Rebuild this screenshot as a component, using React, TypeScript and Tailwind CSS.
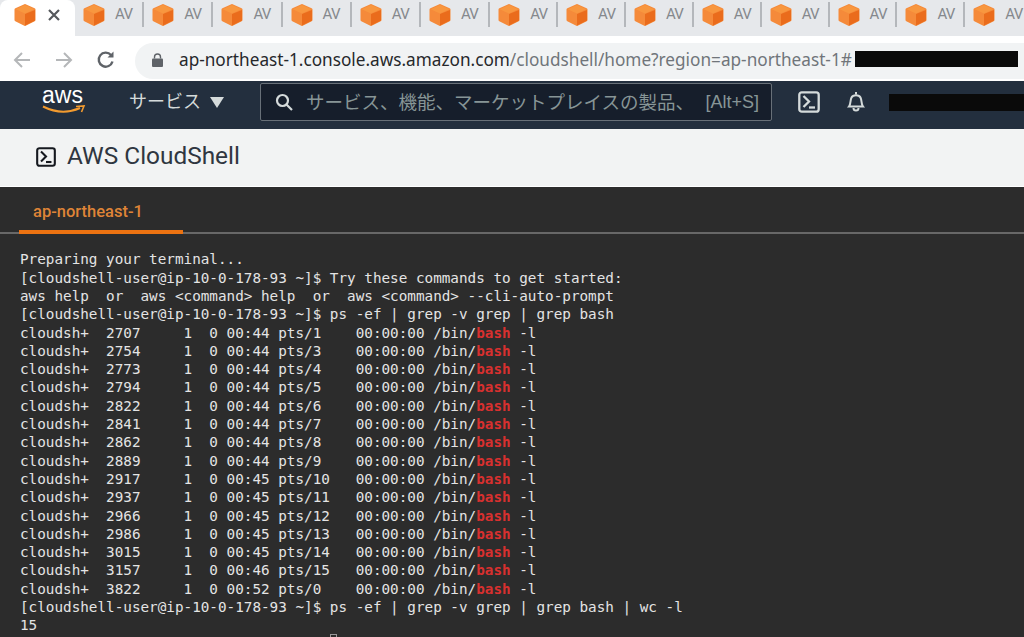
import React from 'react';

const rows = [
  ['2707', '00:44', 'pts/1'],
  ['2754', '00:44', 'pts/3'],
  ['2773', '00:44', 'pts/4'],
  ['2794', '00:44', 'pts/5'],
  ['2822', '00:44', 'pts/6'],
  ['2841', '00:44', 'pts/7'],
  ['2862', '00:44', 'pts/8'],
  ['2889', '00:44', 'pts/9'],
  ['2917', '00:45', 'pts/10'],
  ['2937', '00:45', 'pts/11'],
  ['2966', '00:45', 'pts/12'],
  ['2986', '00:45', 'pts/13'],
  ['3015', '00:45', 'pts/14'],
  ['3157', '00:46', 'pts/15'],
  ['3822', '00:52', 'pts/0'],
];

const Cube = () => (
  <svg width="22" height="22" viewBox="0 0 22 22" className="shrink-0">
    <path d="M11 1.5 L20 5.5 V16 L11 20.5 L2 16 V5.5 Z" fill="#f58a3a" stroke="#f58a3a" strokeWidth="3" strokeLinejoin="round" />
    <path d="M11 10 L21 6 V16.5 L11 21.5 Z" fill="#ea6c1c" />
    <path d="M11 1 L20.5 5.3 L11 9.6 L1.5 5.3 Z" fill="#f8973f" />
  </svg>
);

const TerminalIcon = ({ color, size }: { color: string; size: number }) => (
  <svg width={size} height={size} viewBox="0 0 22 22" fill="none" stroke={color} strokeWidth="2.3" className="shrink-0">
    <rect x="1.3" y="1.3" width="19.4" height="19.4" rx="2.5" />
    <path d="M5.5 5 L11 10.5 L5.5 16" />
    <path d="M11 16.5 H17" />
  </svg>
);

// the later tabs in the strip are a little narrower than the first ones
const Tab = ({ narrow }: { narrow: boolean }) => (
  <div className={`flex h-[25px] shrink-0 items-center pl-[8px] ${narrow ? 'w-[67.9px]' : 'w-[69.2px]'} ${'border-r-2 border-[#b4b7bb]'}`}>
    <Cube />
    <span className="ml-[10px] text-[15px] tracking-[-0.75px] text-[#85888d]">AV</span>
  </div>
);

const App = () => {
  return (
    <div className="flex h-[637px] w-[1024px] flex-col overflow-hidden bg-[#2c2c2c] font-['Roboto',sans-serif]">
      {/* tab strip */}
      <div className="flex h-[36px] shrink-0 overflow-hidden bg-[#e6e8eb]">
        <div className="flex w-[75px] shrink-0 items-start gap-[12px] rounded-t-lg bg-white pl-[14px] pt-[4px]">
          <Cube />
          <svg width="12" height="12" viewBox="0 0 12 12" stroke="#55585c" strokeWidth="2.2" className="mt-[5px]">
            <path d="M1 1 L11 11 M11 1 L1 11" />
          </svg>
        </div>
        <div className="flex pt-[2px]">
          {Array.from({ length: 14 }).map((_, i) => (
            <Tab key={i} narrow={i >= 6} />
          ))}
        </div>
      </div>

      {/* address bar */}
      <div className="flex h-[45px] shrink-0 items-center bg-white pl-[13px] pt-[5px]">
        <svg width="18" height="18" viewBox="0 0 18 18" fill="none" stroke="#b5b7b9" strokeWidth="2" className="mb-[2px]">
          <path d="M17 9 H2 M9 2 L2 9 L9 16" />
        </svg>
        <svg width="18" height="18" viewBox="0 0 18 18" fill="none" stroke="#b5b7b9" strokeWidth="2" className="mb-[2px] ml-[24px]">
          <path d="M1 9 H16 M9 2 L16 9 L9 16" />
        </svg>
        <svg width="20" height="20" viewBox="0 0 20 20" fill="none" stroke="#5f6368" strokeWidth="2.4" className="mb-[2px] ml-[23px]">
          <path d="M16.5 11.5 A7 7 0 1 1 15 5" />
          <path d="M17.5 1.5 V7.5 H11.5 Z" fill="#5f6368" stroke="none" />
        </svg>
        <div className="ml-[19px] flex h-[36px] flex-1 items-center rounded-l-full bg-[#f1f3f4] pl-[17px]">
          <svg width="11" height="14" viewBox="0 0 11 14" className="mb-[2px] shrink-0">
            <path d="M2.5 5.5 V4 A3 3 0 0 1 8.5 4 V5.5" fill="none" stroke="#5f6368" strokeWidth="1.4" />
            <rect x="0" y="5.5" width="11" height="8.5" rx="1" fill="#5f6368" />
          </svg>
          <div className="mb-[2px] ml-[16px] whitespace-nowrap font-['Noto_Sans',sans-serif] text-[17.2px] text-[#70757a]">
            <span className="text-[#26282b]">ap-northeast-1.console.aws.amazon.com</span>/cloudshell/home?region=ap-northeast-1#
          </div>
          <div className="mb-[4px] ml-[3px] h-[16px] w-[163px] shrink-0 bg-[#0a0a0a]" />
        </div>
      </div>

      {/* console nav */}
      <div className="flex h-[48px] shrink-0 items-center bg-[#232f3e] pb-[6px] pl-[42px] text-[#d5dbdb]">
        <div className="relative h-[32px] w-[43px] shrink-0">
          <span className="absolute left-0 top-[-5px] font-['Liberation_Sans',sans-serif] text-[23px] leading-[28px] text-white">aws</span>
          <svg width="44" height="10" viewBox="0 0 44 10" fill="none" className="absolute left-0 top-[19px]">
            <path d="M1 1.5 Q20 11 38 3" stroke="#f39b2f" strokeWidth="2" />
            <path d="M34 1.5 L42 1 L39.5 7" stroke="#f39b2f" strokeWidth="1.6" />
          </svg>
        </div>
        <span className="mb-[3px] ml-[44px] font-['Noto_Sans_CJK_JP',sans-serif] text-[18px]">サービス</span>
        <svg width="14" height="11" viewBox="0 0 14 11" className="ml-[9px]">
          <path d="M0 0 H14 L7 11 Z" fill="#d5dbdb" />
        </svg>
        <div className="ml-[36px] flex h-[38px] w-[512px] shrink-0 items-center rounded-[2px] border border-[#687078] bg-[#161e2b] pl-[14px] pr-[12px]">
          <svg width="18" height="18" viewBox="0 0 18 18" fill="none" stroke="#d5dbdb" strokeWidth="2.2" className="shrink-0">
            <circle cx="7.5" cy="7.5" r="5.5" />
            <path d="M11.5 11.5 L17 17" />
          </svg>
          <span className="ml-[13px] whitespace-nowrap font-['Noto_Sans_CJK_JP',sans-serif] text-[18.5px] text-[#879596]">サービス、機能、マーケットプレイスの製品、</span>
          <span className="ml-auto font-['Liberation_Sans',sans-serif] text-[18px] text-[#879596]">[Alt+S]</span>
        </div>
        <div className="ml-[26px]">
          <TerminalIcon color="#d5dbdb" size={22} />
        </div>
        <svg width="22" height="22" viewBox="0 0 22 22" fill="none" stroke="#d5dbdb" strokeWidth="2" className="ml-[25px]">
          <path d="M4 15.5 C6 13 5 9.5 6.5 6.5 C8 3.5 14 3.5 15.5 6.5 C17 9.5 16 13 18 15.5 Z" />
          <path d="M11 1 V3.5 M8.5 17 A2.5 2.5 0 0 0 13.5 17" />
        </svg>
        <div className="ml-[22px] h-[17px] flex-1 bg-[#0a0a0a]" />
      </div>

      {/* page header */}
      <div className="flex h-[58px] shrink-0 items-center border-b border-white bg-[#f2f3f3] pb-[2px] pl-[36px]">
        <TerminalIcon color="#16191f" size={20} />
        <span className="ml-[11px] text-[24.4px] text-[#2f3640]">AWS CloudShell</span>
      </div>

      {/* region tab */}
      <div className="h-[47px] shrink-0 border-b-2 border-[#686868] pl-[19px]">
        <div className="relative h-[47px] w-[164px] border-b-[4px] border-[#ec7211] pl-[14px] pt-[13px]">
          <span className="text-[16.5px] font-medium leading-[22px] text-[#df8437]">ap-northeast-1</span>
        </div>
      </div>

      {/* terminal */}
      <div className="relative flex-1 whitespace-pre pl-[20px] pt-[16.4px] font-['DejaVu_Sans_Mono',monospace] text-[14.3px] leading-[18.3px] text-[#e4e4e4]">
        <div>Preparing your terminal...</div>
        <div>[cloudshell-user@ip-10-0-178-93 ~]$ Try these commands to get started:</div>
        <div>aws help  or  aws &lt;command&gt; help  or  aws &lt;command&gt; --cli-auto-prompt</div>
        <div>[cloudshell-user@ip-10-0-178-93 ~]$ ps -ef | grep -v grep | grep bash</div>
        {rows.map(([pid, time, tty]) => (
          <div key={pid}>
            {`cloudsh+  ${pid}     1  0 ${time} ${tty.padEnd(9, ' ')}00:00:00 /bin/`}
            <span className="font-bold text-[#d8302f]">bash</span> -l
          </div>
        ))}
        <div>[cloudshell-user@ip-10-0-178-93 ~]$ ps -ef | grep -v grep | grep bash | wc -l</div>
        <div>15</div>
        <div className="absolute bottom-0 left-[330px] h-[3px] w-[7px] border border-b-0 border-[#999]" />
      </div>
    </div>
  );
};

export default App;
